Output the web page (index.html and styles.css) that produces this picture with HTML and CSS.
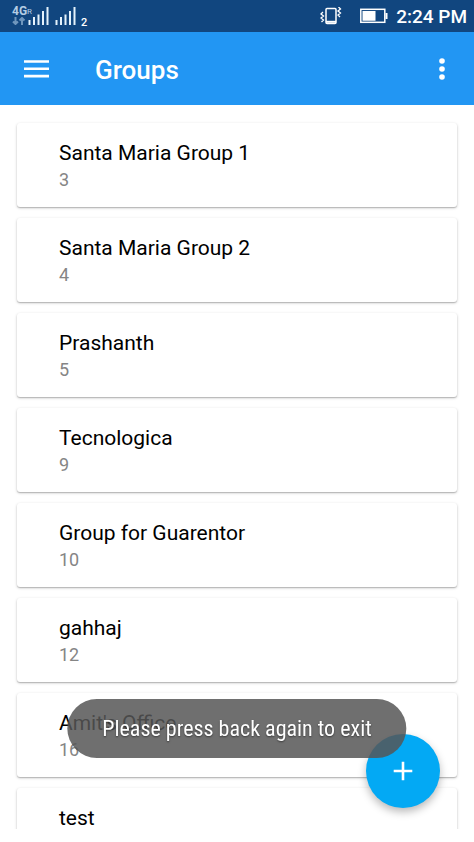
FILE: index.html
```html
<!DOCTYPE html>
<html lang="en">
<head>
<meta charset="utf-8">
<meta name="viewport" content="width=device-width, initial-scale=1">
<title>Groups</title>
<link rel="stylesheet" href="styles.css">
</head>
<body>
<div class="status">
  <div class="network">
    <div class="network-type">
      <div class="network-label">4G<span class="roaming">R</span></div>
      <svg class="arrows" width="14" height="8" viewBox="0 0 14 8" aria-hidden="true"><path d="M3.500 0v7M1 4.500l2.500 2.500 2.500-2.500M10 8V1M7.500 3.500L10 1l2.500 2.500"/></svg>
    </div>
    <svg class="bars" width="22" height="18" viewBox="0 0 22 18" aria-hidden="true"><path d="M1.500 18v-5M6 18v-8M10.500 18V7.500M15 18V4M19.500 18V0"/></svg>
    <svg class="bars second" width="22" height="18" viewBox="0 0 22 18" aria-hidden="true"><path d="M1.500 18v-5M6 18v-8M10.500 18V7.500M15 18V4M19.500 18V0"/></svg>
    <span class="sim">2</span>
  </div>
  <div class="system">
    <svg width="22" height="18" viewBox="0 0 22 18" fill="none" stroke="#fff" aria-hidden="true"><rect x="6" y="1.500" width="10" height="15" rx="1" stroke-width="1.500"/><path d="M6 14.800h10" stroke-width="2"/><path d="M3 5L1 7l2.500 2L1 11l2.500 2L1.500 15M18.500 0l2 2-2.500 2 2.500 2L18 8l2 2" stroke-width="1.300"/></svg>
    <svg class="battery" width="28" height="16" viewBox="0 0 28 16" aria-hidden="true"><rect x=".8" y="1.300" width="24" height="13" fill="none" stroke="#fff" stroke-width="1.500"/><path d="M2.500 3h13v9.700h-13zM25.500 5h2v6h-2z" fill="#fff"/></svg>
    <time>2:24 PM</time>
  </div>
</div>
<header class="appbar">
  <button class="icon-button" aria-label="Open menu"><svg width="25" height="18" viewBox="0 0 25 18" fill="#fff"><path d="M0 .2h25v2.600H0zM0 7.500h25v2.600H0zM0 14.800h25v2.600H0z"/></svg></button>
  <h1>Groups</h1>
  <button class="icon-button" aria-label="More options"><svg width="6" height="22" viewBox="0 0 6 22" fill="#fff"><circle cx="3" cy="3" r="2.800"/><circle cx="3" cy="11" r="2.800"/><circle cx="3" cy="19" r="2.800"/></svg></button>
</header>
<main>
  <ul class="groups">
    <li class="card"><h2>Santa Maria Group 1</h2><p>3</p></li>
    <li class="card"><h2>Santa Maria Group 2</h2><p>4</p></li>
    <li class="card"><h2>Prashanth</h2><p>5</p></li>
    <li class="card"><h2>Tecnologica</h2><p>9</p></li>
    <li class="card"><h2>Group for Guarentor</h2><p>10</p></li>
    <li class="card"><h2>gahhaj</h2><p>12</p></li>
    <li class="card"><h2>Amit's Office</h2><p>16</p></li>
    <li class="card"><h2>test</h2></li>
  </ul>
</main>
<button class="fab" aria-label="Add group"><svg width="20" height="20" viewBox="0 0 20 20" fill="none" stroke="#fff" stroke-width="2.600"><path d="M10 .7v18.600M.7 10h18.600"/></svg></button>
<div class="toast" role="status">Please press back again to exit</div>
</body>
</html>
```
FILE: styles.css
```css
* {
  box-sizing: border-box;
}

body {
  margin: 0;
  height: 100vh;
  display: flex;
  flex-direction: column;
  overflow: hidden;
  background: #fff;
  color: #000;
  font-family: Roboto, "Liberation Sans", sans-serif;
}

h1, h2, p, ul {
  margin: 0;
  padding: 0;
}

button {
  border: 0;
  padding: 0;
  background: none;
  cursor: pointer;
}

svg {
  display: block;
}

.status {
  flex: none;
  display: flex;
  justify-content: space-between;
  align-items: center;
  height: 32px;
  padding: 0 7px 0 12px;
  background: #11467f;
  color: #fff;
}

.network {
  display: flex;
  align-items: flex-end;
  height: 18px;
}

.network-type {
  width: 16px;
  color: #b4cde4;
}

.network-label {
  display: flex;
  font-size: 12px;
  font-weight: 700;
  line-height: 11px;
}

.roaming {
  font-size: 8px;
  font-weight: 400;
  line-height: 11px;
}

.arrows {
  fill: none;
  stroke: #6f96bd;
  stroke-width: 2;
}

.bars {
  fill: none;
  stroke: #e4f2fc;
  stroke-width: 2;
}

.second {
  margin-left: 5px;
}

.sim {
  margin: 0 0 -3px 4px;
  font-size: 11px;
  font-weight: 500;
  line-height: 11px;
}

.system {
  display: flex;
  align-items: center;
}

.battery {
  margin: 0 8px 0 18px;
}

time {
  padding-top: 2px;
  font-size: 19px;
  font-weight: 500;
  line-height: 24px;
}

.appbar {
  flex: none;
  display: flex;
  align-items: center;
  height: 73px;
  padding: 0 16px 0 20px;
  background: #2296f3;
  color: #fff;
}

.icon-button {
  display: grid;
  place-items: center;
  width: 32px;
  height: 48px;
}

h1 {
  flex: 1;
  padding: 2px 0 0 43px;
  font-size: 26px;
  font-weight: 500;
  line-height: 32px;
}

main {
  flex: 1;
  min-height: 0;
  margin-bottom: 13px;
  padding: 18px 17px 0;
  overflow: hidden;
}

.groups {
  display: grid;
  gap: 11px;
  list-style: none;
}

.card {
  height: 84px;
  padding: 17px 42px 0;
  border-radius: 3px;
  background: #fff;
  box-shadow: 0 1px 3px rgba(0, 0, 0, .22), 0 1px 1px rgba(0, 0, 0, .16);
}

h2 {
  font-size: 21px;
  font-weight: 400;
  line-height: 26px;
}

.card p {
  color: #858585;
  font-size: 18px;
  line-height: 27px;
}

.fab {
  position: fixed;
  right: 34px;
  bottom: 34px;
  display: grid;
  place-items: center;
  width: 74px;
  height: 74px;
  border-radius: 50%;
  background: #03a9f4;
  box-shadow: 0 4px 8px rgba(0, 0, 0, .28);
}

.toast {
  position: fixed;
  left: 50%;
  bottom: 84px;
  transform: translateX(-50%);
  padding: 15px 35px 14px;
  border-radius: 30px;
  background: rgba(86, 86, 86, .85);
  color: #fff;
  font-family: "Roboto Condensed", Roboto, sans-serif;
  font-size: 22px;
  line-height: 30px;
  text-shadow: 0 1px 2px rgba(0, 0, 0, .5);
  white-space: nowrap;
}
```
